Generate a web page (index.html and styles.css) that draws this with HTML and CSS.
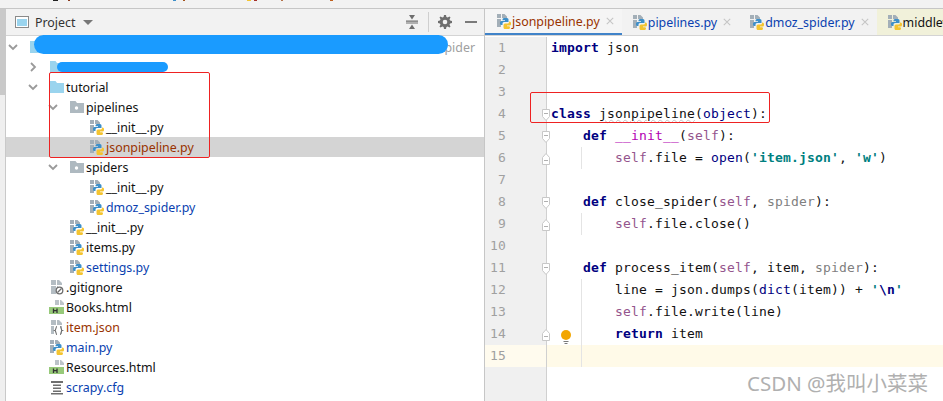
FILE: index.html
```html
<!DOCTYPE html>
<html lang="en">
<head>
    <meta charset="UTF-8">
    <meta name="viewport" content="width=device-width, initial-scale=1.0">
    <title>jsonpipeline.py</title>
    <link rel="stylesheet" href="styles.css">
</head>
<body>
    <svg class="defs" width="0" height="0">
        <symbol id="py" viewBox="0 0 16 16">
            <path d="M1 1h4v4H1zM6 1h2.500L11 3.500V5H6zM1 6h4v8H1z" fill="#a3afb8"/>
            <path d="M8 5h3a1.500 1.500 0 0 1 1.500 1.500V9H8a1.500 1.500 0 0 0-1.500 1.500V12H5.500A1.500 1.500 0 0 1 4 10.500V9.500A1.500 1.500 0 0 1 5.500 8h3.500V7.300H6.500V6.500A1.500 1.500 0 0 1 8 5z" fill="#3d8fc9"/>
            <path d="M13 8.500h.5A1.500 1.500 0 0 1 15 10v1a1.500 1.500 0 0 1-1.500 1.500H11v.7h2.500v.3A1.500 1.500 0 0 1 12 16H9.500A1.500 1.500 0 0 1 7.500 14.500V12A1.500 1.500 0 0 1 9 10.500h2.500A1.500 1.500 0 0 0 13 9z" fill="#f4c430"/>
        </symbol>
        <symbol id="folder" viewBox="0 0 16 16">
            <path d="M1 2h5.500l1.500 2h7v10H1z" fill="#9ad4ee"/>
        </symbol>
        <symbol id="pkg" viewBox="0 0 16 16">
            <path d="M1 2h5.500l1.500 2h7v10H1z" fill="#aeb9c0"/>
            <circle cx="7.500" cy="9" r="1.700" fill="#fff"/>
        </symbol>
        <symbol id="ignore" viewBox="0 0 16 16">
            <path d="M2 1h5v5H2zM8 1h2l3 3v2H8zM2 7h5v8H2zM8 7h1v2H8z" fill="#b4bdc3"/>
            <circle cx="10.500" cy="11.500" r="3.300" fill="#fff" stroke="#6e6e6e" stroke-width="1.300"/>
            <path d="M8.500 13.500l4-4" stroke="#6e6e6e" stroke-width="1.300"/>
        </symbol>
        <symbol id="html" viewBox="0 0 16 16">
            <path d="M6 1h4v5H6zM11 1h1l3 3v2h-4z" fill="#bcc4c9"/>
            <path d="M0 8h15v7H0z" fill="#97c97a"/>
            <path d="M4.500 9.500v4.500M8 9.500v4.500M4.500 11.700H8" stroke="#333" stroke-width="1.300" fill="none"/>
        </symbol>
        <symbol id="json" viewBox="0 0 16 16">
            <path d="M2 1h5v5H2zM8 1h2l3 3v2H8zM2 7h3v8H2zM12 7h1v8h-1z" fill="#b4bdc3"/>
            <path d="M8 7.500C6.500 7.500 7.500 11 5.800 11.500 7.500 12 6.500 15.500 8 15.500M11 7.500c1.500 0 .5 3.500 2.200 4-1.700.5-.7 4-2.200 4" stroke="#666" stroke-width="1.100" fill="none"/>
        </symbol>
        <symbol id="cfg" viewBox="0 0 16 16">
            <path d="M2 2h12v2H2zM4 5.500h8v1.500H4zM4 8.500h8v1.500H4zM4 11.500h8V13H4zM2 14h12v1.500H2z" fill="#6e6e6e"/>
        </symbol>
        <symbol id="open" viewBox="0 0 12 12">
            <path d="M2 4l4 4 4-4" fill="none" stroke="#9a9a9a" stroke-width="1.800"/>
        </symbol>
        <symbol id="closed" viewBox="0 0 12 12">
            <path d="M4 2l4 4-4 4" fill="none" stroke="#9a9a9a" stroke-width="1.800"/>
        </symbol>
        <symbol id="close" viewBox="0 0 10 10">
            <path d="M1 1l8 8M9 1l-8 8" stroke="#c4c4c4" stroke-width="1.300"/>
        </symbol>
        <symbol id="fold-top" viewBox="0 0 8 12">
            <path d="M.5.500h7v7L4 11.500.5 7.500z" fill="#fff" stroke="#c8c8c8"/>
            <path d="M2 4.500h4" stroke="#b0b0b0"/>
        </symbol>
        <symbol id="fold-end" viewBox="0 0 8 12">
            <path d="M.5 11.500h7v-7L4 .500.5 4.500z" fill="#fff" stroke="#c8c8c8"/>
            <path d="M2 7.500h4" stroke="#b0b0b0"/>
        </symbol>
    </svg>

    <div class="top-strip">
        <i class="clip clip-a"></i><i class="clip clip-b"></i><i class="clip clip-c"></i><i class="clip clip-d"></i><i class="clip clip-e"></i><i class="clip clip-f"></i><i class="clip clip-g"></i><i class="clip clip-h"></i>
    </div>

    <div class="ide">
        <div class="side-strip"></div>

        <!-- project tree -->
        <div class="project">
            <div class="project-head">
                <svg class="head-icon" viewBox="0 0 14 12"><rect x=".5" y=".5" width="13" height="11" fill="#fff" stroke="#8a8a8a"/><rect x="2" y="3" width="10" height="7" fill="#9ad4ee"/></svg>
                <span class="head-title">Project</span>
                <span class="head-arrow"></span>
                <span class="head-tools">
                    <svg class="tool" viewBox="0 0 14 14"><path d="M1 6.200h12M1 8h12" stroke="#6e6e6e" stroke-width="1.200"/><path d="M4 0h6L7 4.500zM4 14h6L7 9.500z" fill="#6e6e6e"/></svg>
                    <span class="tool-sep"></span>
                    <svg class="tool" viewBox="0 0 14 14"><path d="M6 0h2l.4 2 1.300.5L11.500 1.500l1 1-1 1.800.6 1.300 1.900.4v2l-1.900.4-.6 1.300 1 1.800-1 1-1.800-1-1.300.5L8 14H6l-.4-2-1.300-.5-1.800 1-1-1 1-1.800-.6-1.300L0 8V6l1.900-.4.6-1.300-1-1.800 1-1 1.800 1L5.600 2z" fill="#6e6e6e"/><circle cx="7" cy="7" r="2.300" fill="#f2f2f2"/></svg>
                    <span class="tool-min"></span>
                </span>
            </div>

            <div class="tree">
                <div class="row lv0"><svg class="chev"><use href="#open"/></svg><svg class="icon"><use href="#folder"/></svg><span class="root-path">spider</span></div>
                <div class="row lv1"><svg class="chev"><use href="#closed"/></svg><svg class="icon"><use href="#folder"/></svg></div>
                <div class="row lv1"><svg class="chev"><use href="#open"/></svg><svg class="icon"><use href="#folder"/></svg><span>tutorial</span></div>
                <div class="row lv2"><svg class="chev"><use href="#open"/></svg><svg class="icon"><use href="#pkg"/></svg><span>pipelines</span></div>
                <div class="row lv3"><span class="no-chev"></span><svg class="icon"><use href="#py"/></svg><span>__init__.py</span></div>
                <div class="row lv3 selected"><span class="no-chev"></span><svg class="icon"><use href="#py"/></svg><span class="f-new">jsonpipeline.py</span></div>
                <div class="row lv2"><svg class="chev"><use href="#open"/></svg><svg class="icon"><use href="#pkg"/></svg><span>spiders</span></div>
                <div class="row lv3"><span class="no-chev"></span><svg class="icon"><use href="#py"/></svg><span>__init__.py</span></div>
                <div class="row lv3"><span class="no-chev"></span><svg class="icon"><use href="#py"/></svg><span class="f-mod">dmoz_spider.py</span></div>
                <div class="row lv2"><span class="no-chev"></span><svg class="icon"><use href="#py"/></svg><span>__init__.py</span></div>
                <div class="row lv2"><span class="no-chev"></span><svg class="icon"><use href="#py"/></svg><span>items.py</span></div>
                <div class="row lv2"><span class="no-chev"></span><svg class="icon"><use href="#py"/></svg><span class="f-mod">settings.py</span></div>
                <div class="row lv1"><span class="no-chev"></span><svg class="icon"><use href="#ignore"/></svg><span>.gitignore</span></div>
                <div class="row lv1"><span class="no-chev"></span><svg class="icon"><use href="#html"/></svg><span>Books.html</span></div>
                <div class="row lv1"><span class="no-chev"></span><svg class="icon"><use href="#json"/></svg><span class="f-new">item.json</span></div>
                <div class="row lv1"><span class="no-chev"></span><svg class="icon"><use href="#py"/></svg><span class="f-mod">main.py</span></div>
                <div class="row lv1"><span class="no-chev"></span><svg class="icon"><use href="#html"/></svg><span>Resources.html</span></div>
                <div class="row lv1"><span class="no-chev"></span><svg class="icon"><use href="#cfg"/></svg><span class="f-mod">scrapy.cfg</span></div>
            </div>

            <!-- scribbles and red marks drawn over the screenshot -->
            <span class="scribble scribble-a"></span>
            <span class="scribble scribble-b"></span>
            <span class="red-box red-box-tree"></span>
        </div>

        <!-- editor -->
        <div class="editor">
            <div class="tabs">
                <div class="tab active"><svg class="icon"><use href="#py"/></svg><span class="f-new">jsonpipeline.py</span><svg class="tab-x"><use href="#close"/></svg></div>
                <div class="tab"><svg class="icon"><use href="#py"/></svg><span class="f-mod">pipelines.py</span><svg class="tab-x"><use href="#close"/></svg></div>
                <div class="tab"><svg class="icon"><use href="#py"/></svg><span class="f-mod">dmoz_spider.py</span><svg class="tab-x"><use href="#close"/></svg></div>
                <div class="tab tab-yellow"><svg class="icon"><use href="#py"/></svg><span>middlewares.py</span></div>
            </div>

            <div class="code">
                <div class="line"><span class="num">1</span><span class="mark"></span><span class="src"><b>import</b> json</span></div>
                <div class="line"><span class="num">2</span><span class="mark"></span><span class="src"></span></div>
                <div class="line"><span class="num">3</span><span class="mark"></span><span class="src"></span></div>
                <div class="line"><span class="num">4</span><span class="mark"><svg class="fold"><use href="#fold-top"/></svg></span><span class="src"><b>class</b> <u>jsonpipeline</u>(<span class="bi">object</span>):</span></div>
                <div class="line"><span class="num">5</span><span class="mark"><svg class="fold"><use href="#fold-top"/></svg></span><span class="src">    <b>def</b> <span class="magic">__init__</span>(<span class="self">self</span>):</span></div>
                <div class="line guide"><span class="num">6</span><span class="mark"><svg class="fold"><use href="#fold-end"/></svg></span><span class="src">        <span class="self">self</span>.file = <span class="bi">open</span>(<span class="str">'item.json'</span>, <span class="str">'w'</span>)</span></div>
                <div class="line"><span class="num">7</span><span class="mark"></span><span class="src"></span></div>
                <div class="line"><span class="num">8</span><span class="mark"><svg class="fold"><use href="#fold-top"/></svg></span><span class="src">    <b>def</b> close_spider(<span class="self">self</span>, <span class="unused">spider</span>):</span></div>
                <div class="line guide"><span class="num">9</span><span class="mark"><svg class="fold"><use href="#fold-end"/></svg></span><span class="src">        <span class="self">self</span>.file.close()</span></div>
                <div class="line"><span class="num">10</span><span class="mark"></span><span class="src"></span></div>
                <div class="line"><span class="num">11</span><span class="mark"><svg class="fold"><use href="#fold-top"/></svg></span><span class="src">    <b>def</b> process_item(<span class="self">self</span>, item, <span class="unused">spider</span>):</span></div>
                <div class="line guide"><span class="num">12</span><span class="mark"></span><span class="src">        line = json.dumps(<span class="bi">dict</span>(item)) + <span class="str">'<b>\n</b>'</span></span></div>
                <div class="line guide"><span class="num">13</span><span class="mark"></span><span class="src">        <span class="self">self</span>.file.write(line)</span></div>
                <div class="line guide"><span class="num">14</span><span class="mark"><svg class="fold"><use href="#fold-end"/></svg><svg class="bulb" viewBox="0 0 12 16"><circle cx="6" cy="6" r="5" fill="#f2a600"/><path d="M3.500 12.500h5M4.500 14.500h3" stroke="#7a7a7a"/></svg></span><span class="src">        <b>return</b> item</span></div>
                <div class="line guide current"><span class="num">15</span><span class="mark"></span><span class="src"></span></div>
                <div class="line tail"><span class="num"></span><span class="mark"></span><span class="src"></span></div>
            </div>

            <span class="red-box red-box-code"></span>
            <span class="watermark">CSDN @我叫小菜菜</span>
        </div>
    </div>
</body>
</html>
```

FILE: styles.css
```css
html, body {
    margin: 0;
    height: 401px;
    overflow: hidden;
    background-color: #fff;
}
body {
    font-family: "Noto Sans", "Open Sans", sans-serif;
    font-size: 12.4px;
    color: #111;
}
.defs {
    position: absolute;
}
.top-strip {
    position: relative;
    height: 8px;
    background-color: #f2f2f2;
    border-bottom: 1px solid #c6c6c6;
}
.clip {
    position: absolute;
    top: 0;
    height: 1px;
}
.clip-a { left: 53px; width: 5px; background-color: #222; }
.clip-b { left: 68px; width: 2px; background-color: #8a3b1e; }
.clip-c { left: 173px; width: 3px; background-color: #3d8fc9; }
.clip-d { left: 183px; width: 2px; background-color: #a5541e; }
.clip-e { left: 247px; width: 4px; background-color: #f4c430; }
.clip-f { left: 254px; width: 3px; background-color: #a5302a; }
.clip-g { left: 281px; width: 2px; background-color: #b5734a; }
.clip-h { left: 330px; width: 3px; background-color: #c0601e; }
.ide {
    display: flex;
    height: 392px;
}
.side-strip {
    width: 5px;
    flex: none;
    background: linear-gradient(#c9c9c9 86px, #efefef 86px);
    border-right: 1px solid #c9c9c9;
}

/* project tree */
.project {
    position: relative;
    width: 478px;
    flex: none;
    border-right: 1px solid #c6c6c6;
}
.project-head {
    display: flex;
    align-items: center;
    height: 26px;
    padding-left: 9px;
    background-color: #f2f2f2;
    border-bottom: 1px solid #d4d4d4;
}
.head-icon {
    width: 14px;
    height: 12px;
}
.head-title {
    margin-left: 6px;
    color: #333;
}
.head-arrow {
    margin-left: 8px;
    border-left: 5px solid transparent;
    border-right: 5px solid transparent;
    border-top: 5px solid #777;
}
.head-tools {
    display: flex;
    align-items: center;
    margin-left: auto;
    padding-right: 7px;
}
.tool {
    width: 14px;
    height: 14px;
}
.tool-sep {
    width: 1px;
    height: 20px;
    margin: 0 9px;
    background-color: #cfcfcf;
}
.tool-min {
    width: 12px;
    height: 2px;
    margin-left: 13px;
    background-color: #7a7a7a;
}
.tree {
    padding-top: 1px;
}
.row {
    display: flex;
    align-items: center;
    height: 20px;
    white-space: nowrap;
}
.lv0 { padding-left: 1px; }
.lv1 { padding-left: 21px; }
.lv2 { padding-left: 41px; }
.lv3 { padding-left: 61px; }
.selected {
    background-color: #d4d4d4;
}
.chev {
    width: 12px;
    height: 12px;
    margin-right: 10px;
    flex: none;
}
.no-chev {
    width: 22px;
    flex: none;
}
.icon {
    width: 16px;
    height: 16px;
    margin-right: 1px;
    flex: none;
}
.root-path {
    margin-left: auto;
    padding-right: 9px;
    color: #a0a0a0;
}
.f-new {
    color: #993300;
}
.f-mod {
    color: #0a3fb0;
}
.scribble {
    position: absolute;
    background-color: #1a9bff;
    border-radius: 10px;
}
.scribble-a {
    left: 28px;
    top: 26px;
    width: 414px;
    height: 19px;
}
.scribble-b {
    left: 51px;
    top: 53px;
    width: 111px;
    height: 10px;
}
.red-box {
    position: absolute;
    border: 1px solid #ee2222;
    border-radius: 2px;
}
.red-box-tree {
    left: 43px;
    top: 63px;
    width: 159px;
    height: 84px;
}

/* editor */
.editor {
    position: relative;
    flex: 1;
    min-width: 0;
    overflow: hidden;
}
.tabs {
    display: flex;
    height: 26px;
    background-color: #f2f2f2;
    border-bottom: 1px solid #d4d4d4;
}
.tab {
    display: flex;
    align-items: center;
    flex: none;
    padding: 0 8px 0 10px;
    height: 26px;
    box-sizing: border-box;
}
.tab .icon {
    margin-right: 0;
}
.active {
    padding-left: 11px;
    border-bottom: 2px solid #4083c9;
    background-color: #f5f5f5;
}
.tab-yellow {
    background-color: #f1f1da;
    padding-right: 0;
}
.tab-x {
    width: 8px;
    height: 8px;
    margin-left: 6px;
}
.code {
    padding-top: 1px;
    font-family: "DejaVu Sans Mono", "Liberation Mono", monospace;
    font-size: 13px;
    letter-spacing: .17px;
}
.line {
    position: relative;
    display: flex;
    height: 22px;
    line-height: 22px;
}
.tail {
    height: 36px;
}
.num {
    width: 61px;
    padding-right: 40px;
    flex: none;
    box-sizing: border-box;
    text-align: right;
    background-color: #f0f0f0;
    color: #a0a0a0;
}
.mark {
    position: relative;
    width: 4px;
    flex: none;
    border-left: 1px solid #d0d0d0;
}
.src {
    flex: 1;
    white-space: pre;
}
.guide::after {
    content: "";
    position: absolute;
    left: 96px;
    top: 0;
    bottom: 0;
    width: 1px;
    background-color: #e4e4e4;
}
.current .src,
.current .mark {
    background-color: #fffae8;
}
.current .num {
    background-color: #fffbee;
}
.fold {
    position: absolute;
    left: -5px;
    top: 6px;
    width: 8px;
    height: 12px;
}
.bulb {
    position: absolute;
    left: 13px;
    top: 6px;
    width: 12px;
    height: 16px;
}
.src b {
    color: #000080;
    font-weight: bold;
}
.src u {
    text-decoration: underline wavy #c4c4c4 1px;
}
.bi {
    color: #000080;
}
.self {
    color: #94558d;
}
.magic {
    color: #b200b2;
}
.unused {
    color: #808080;
}
.str {
    color: #008080;
    font-weight: bold;
}
.red-box-code {
    left: 45px;
    top: 83px;
    width: 238px;
    height: 29px;
}
.watermark {
    position: absolute;
    left: 262px;
    top: 358px;
    font-family: "Noto Sans", "Noto Sans CJK SC", sans-serif;
    font-size: 20.5px;
    color: #b0b0b0;
    white-space: nowrap;
}
```
